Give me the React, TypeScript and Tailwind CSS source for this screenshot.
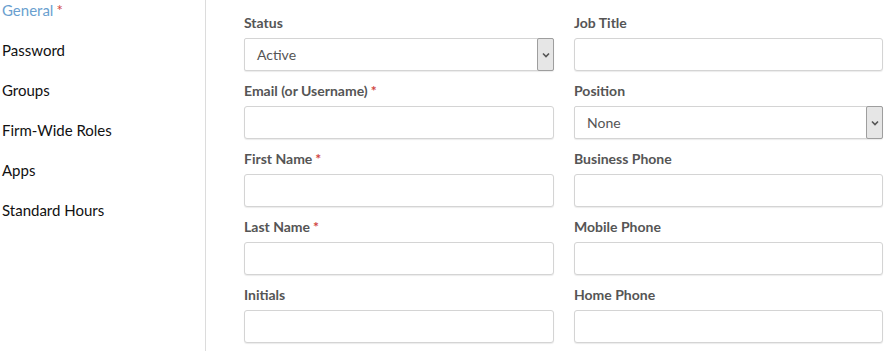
import React from "react";

const Star = () => <span className="text-[#d0453f] ml-[3px]">*</span>;

function Chevron() {
  return (
    <svg width="8" height="6" viewBox="0 0 8 6" className="block">
      <path d="M1 1.5 L4 4.5 L7 1.5" fill="none" stroke="#555" strokeWidth="1.6" />
    </svg>
  );
}

function Field({ label, req, select }: { label: string; req?: boolean; select?: string }) {
  return (
    <div className="flex flex-col">
      <div className="h-[20px] leading-[20px] text-[14px] font-bold text-[#555] mb-[5px]">
        {label}
        {req && <Star />}
      </div>
      {select ? (
        <div className="h-[33px] border border-[#d4d4d4] rounded-[2px] bg-white shadow-[0_1px_1px_rgba(0,0,0,0.08)] flex items-center justify-between">
          <span className="pl-[12px] text-[14px] text-[#555]">{select}</span>
          <div className="h-[33px] w-[17px] -mr-px border border-[#9e9e9e] bg-[#e6e6e6] rounded-[2px] flex items-center justify-center">
            <Chevron />
          </div>
        </div>
      ) : (
        <div className="h-[33px] border border-[#d4d4d4] rounded-[3px] bg-white shadow-[0_1px_1px_rgba(0,0,0,0.08)]" />
      )}
    </div>
  );
}

export default function App() {
  const nav = ["Password", "Groups", "Firm-Wide Roles", "Apps", "Standard Hours"];
  return (
    <div className="flex w-[888px] h-[351px] bg-white overflow-hidden" style={{ fontFamily: "Lato, 'Noto Sans', sans-serif" }}>
      <div className="w-[206px] shrink-0 border-r border-[#dcdcdc] pl-[2px] flex flex-col gap-[20px]">
        <div className="h-[20px] leading-[20px] text-[15px] text-[#6a9fcf]">
          General
          <Star />
        </div>
        {nav.map((n) => (
          <div key={n} className="h-[20px] leading-[20px] text-[15px] text-[#111]">
            {n}
          </div>
        ))}
      </div>
      <div className="pl-[38px] pt-[13px] grid grid-cols-[310px_309px] gap-x-[20px] gap-y-[10px] content-start">
        <Field label="Status" select="Active" />
        <Field label="Job Title" />
        <Field label="Email (or Username)" req />
        <Field label="Position" select="None" />
        <Field label="First Name" req />
        <Field label="Business Phone" />
        <Field label="Last Name" req />
        <Field label="Mobile Phone" />
        <Field label="Initials" />
        <Field label="Home Phone" />
      </div>
    </div>
  );
}
